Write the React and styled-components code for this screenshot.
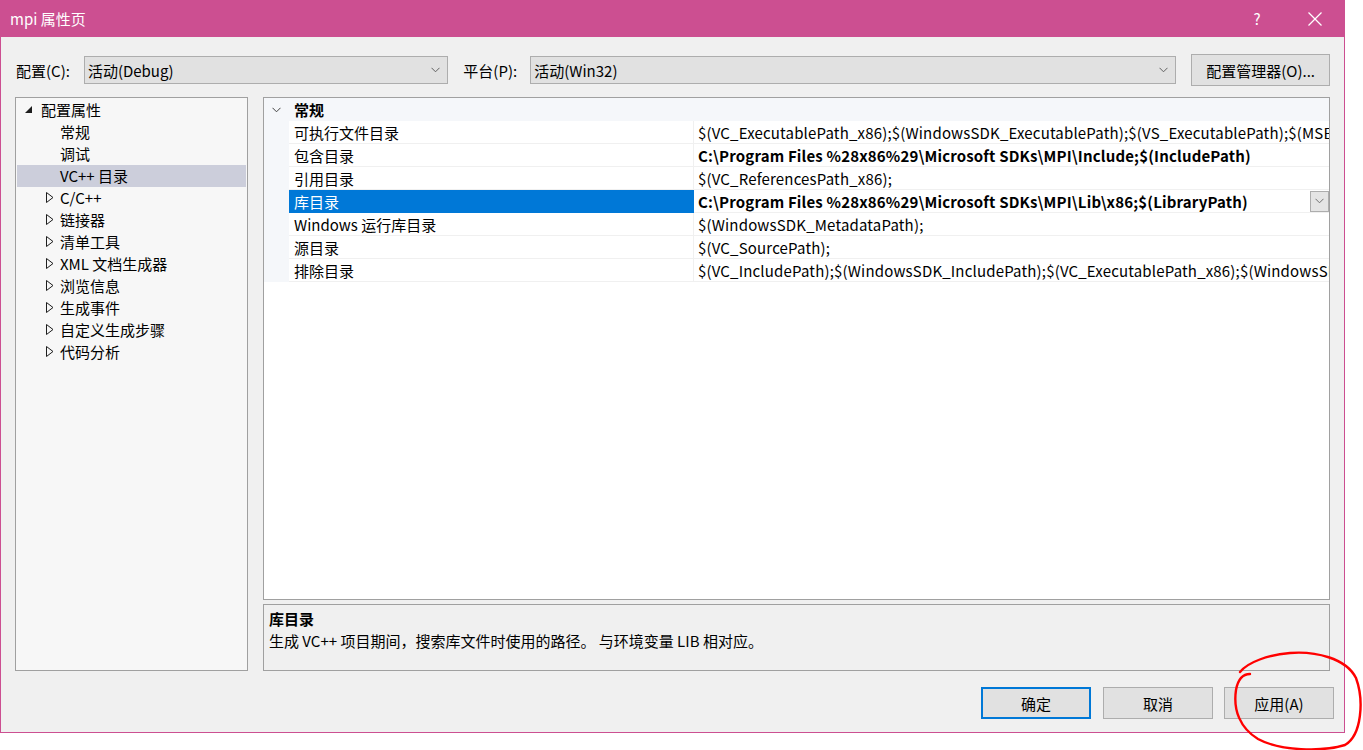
import React from 'react';
import styled, { createGlobalStyle, css } from 'styled-components';

const GlobalStyle = createGlobalStyle`
  html, body {
    margin: 0;
    background: #fff;
  }
  body {
    font-family: "Noto Sans CJK SC", "Noto Sans", sans-serif;
    font-size: 15px;
    color: #000;
  }
`;

const Page = styled.div`
  position: relative;
  width: 1363px;
  height: 750px;
  overflow: hidden;
`;

const Dialog = styled.div`
  width: 1345px;
  height: 733px;
  box-sizing: border-box;
  border: 1px solid #cc4f91;
  border-top: none;
  background: #f0f0f0;
  display: flex;
  flex-direction: column;
`;

const TitleBar = styled.div`
  height: 37px;
  background: #cc4f91;
  color: #fff;
  display: flex;
  align-items: center;
  padding-left: 9px;
  font-size: 15px;
`;

const TitleText = styled.span`
  flex: 1;
`;

const TitleButton = styled.div`
  width: 58px;
  height: 37px;
  display: flex;
  align-items: center;
  justify-content: center;
  color: #fff;
  font-size: 15px;
`;

const Body = styled.div`
  flex: 1;
  padding: 17px 14px 0 14px;
  display: flex;
  flex-direction: column;
`;

const ConfigRow = styled.div`
  height: 32px;
  display: flex;
  align-items: center;
`;

const Label = styled.span`
  width: ${p => p.w}px;
  margin-left: ${p => p.ml || 0}px;
  padding-left: 1px;
  box-sizing: border-box;
`;

const Combo = styled.div`
  width: ${p => p.w}px;
  height: 28px;
  box-sizing: border-box;
  border: 1px solid #adadad;
  background: #e1e1e1;
  display: flex;
  align-items: center;
  padding-left: 3px;
`;

const ComboText = styled.span`
  flex: 1;
`;

const ChevronBox = styled.span`
  width: 24px;
  display: flex;
  align-items: center;
  justify-content: center;
`;

const Button = styled.div`
  width: ${p => p.w || 110}px;
  height: 32px;
  box-sizing: border-box;
  margin-left: ${p => p.ml || 0}px;
  border: 1px solid #adadad;
  background: #e1e1e1;
  display: flex;
  align-items: center;
  justify-content: center;
  ${p => p.primary && css`
    border: 2px solid #0078d7;
  `}
`;

const Main = styled.div`
  margin-top: 11px;
  height: 574px;
  display: flex;
  gap: 15px;
`;

const Tree = styled.div`
  width: 233px;
  box-sizing: border-box;
  border: 1px solid #a0a0a0;
  background: #f7f7f7;
  padding: 1px;
`;

const TreeItem = styled.div`
  height: 22px;
  box-sizing: border-box;
  padding-bottom: 1px;
  display: flex;
  align-items: center;
  padding-left: ${p => p.indent}px;
  background: ${p => (p.selected ? '#cccedb' : 'transparent')};
`;

const Expander = styled.span`
  width: ${p => p.w}px;
  display: flex;
  align-items: center;
`;

const RightCol = styled.div`
  flex: 1;
  display: flex;
  flex-direction: column;
  gap: 4px;
`;

const Grid = styled.div`
  height: 503px;
  box-sizing: border-box;
  border: 1px solid #a0a0a0;
  background: #fff;
  overflow: hidden;
`;

const HeaderRow = styled.div`
  height: 23px;
  display: flex;
  align-items: center;
  background: #f5f7fa;
  font-weight: bold;
`;

const HeaderText = styled.span`
  padding-left: 5px;
  padding-bottom: 1px;
`;

const Gutter = styled.div`
  width: 25px;
  height: 100%;
  background: #f5f7fa;
  display: flex;
  align-items: center;
  justify-content: center;
`;

const PropRow = styled.div`
  height: 23px;
  display: grid;
  grid-template-columns: 25px 405px 1fr;
`;

const NameCell = styled.div`
  box-sizing: border-box;
  border-bottom: 1px solid #f0f0f0;
  border-right: 1px solid #f0f0f0;
  padding-left: 5px;
  display: flex;
  align-items: center;
  white-space: nowrap;
  ${p => p.selected && css`
    background: #0078d7;
    color: #fff;
    border-color: #0078d7;
  `}
`;

const ValueCell = styled.div`
  box-sizing: border-box;
  border-bottom: 1px solid #f0f0f0;
  padding-left: 4px;
  display: flex;
  align-items: center;
  white-space: nowrap;
  overflow: hidden;
  letter-spacing: 0.17px;
  font-weight: ${p => (p.bold ? 'bold' : 'normal')};
`;

const ValueText = styled.span`
  flex: 1;
  overflow: hidden;
`;

const CellDrop = styled.span`
  width: 19px;
  height: 21px;
  box-sizing: border-box;
  border: 1px solid #adadad;
  background: #e5e5e5;
  display: flex;
  align-items: center;
  justify-content: center;
  flex-shrink: 0;
`;

const Description = styled.div`
  height: 67px;
  box-sizing: border-box;
  border: 1px solid #a0a0a0;
  background: #f0f0f0;
  padding: 3px 5px;
`;

const DescTitle = styled.div`
  font-weight: bold;
  height: 22px;
  line-height: 22px;
`;

const DescText = styled.div`
  height: 22px;
  line-height: 22px;
`;

const Footer = styled.div`
  margin-top: 16px;
  margin-right: -4px;
  display: flex;
  justify-content: flex-end;
`;

const Scribble = styled.svg`
  position: absolute;
  left: 1225px;
  top: 645px;
`;

const Chevron = ({ color = '#606060', size = 9 }) => (
  <svg width={size} height={6} viewBox="0 0 9 6">
    <polyline points="0.5,0.8 4.5,4.8 8.5,0.8" fill="none" stroke={color} strokeWidth="1" />
  </svg>
);

const Collapsed = () => (
  <svg width="8" height="11" viewBox="0 0 8 11">
    <polygon points="0.5,0.5 7,5.5 0.5,10.5" fill="none" stroke="#1e1e1e" strokeWidth="1" />
  </svg>
);

const Expanded = () => (
  <svg width="7" height="7" viewBox="0 0 7 7">
    <polygon points="7,0 7,7 0,7" fill="#1e1e1e" />
  </svg>
);

const CloseIcon = () => (
  <svg width="14" height="14" viewBox="0 0 14 14">
    <line x1="0.5" y1="0.5" x2="13.5" y2="13.5" stroke="#fff" strokeWidth="1.2" />
    <line x1="13.5" y1="0.5" x2="0.5" y2="13.5" stroke="#fff" strokeWidth="1.2" />
  </svg>
);

const treeChildren = ['常规', '调试', 'VC++ 目录'];
const treeGroups = ['C/C++', '链接器', '清单工具', 'XML 文档生成器', '浏览信息', '生成事件', '自定义生成步骤', '代码分析'];

const props = [
  { name: '可执行文件目录', value: '$(VC_ExecutablePath_x86);$(WindowsSDK_ExecutablePath);$(VS_ExecutablePath);$(MSBuild_ExecutablePath);$(FxCopDir);$(PATH);' },
  { name: '包含目录', value: 'C:\\Program Files %28x86%29\\Microsoft SDKs\\MPI\\Include;$(IncludePath)', bold: true },
  { name: '引用目录', value: '$(VC_ReferencesPath_x86);' },
  { name: '库目录', value: 'C:\\Program Files %28x86%29\\Microsoft SDKs\\MPI\\Lib\\x86;$(LibraryPath)', bold: true, selected: true },
  { name: 'Windows 运行库目录', value: '$(WindowsSDK_MetadataPath);' },
  { name: '源目录', value: '$(VC_SourcePath);' },
  { name: '排除目录', value: '$(VC_IncludePath);$(WindowsSDK_IncludePath);$(VC_ExecutablePath_x86);$(WindowsSDK_LibraryPath_x86);' },
];

const App = () => {
  return (
    <Page>
      <GlobalStyle />
      <Dialog>
        <TitleBar>
          <TitleText>mpi 属性页</TitleText>
          <TitleButton>?</TitleButton>
          <TitleButton>
            <CloseIcon />
          </TitleButton>
        </TitleBar>
        <Body>
          <ConfigRow>
            <Label w={69}>配置(C):</Label>
            <Combo w={365}>
              <ComboText>活动(Debug)</ComboText>
              <ChevronBox><Chevron /></ChevronBox>
            </Combo>
            <Label w={68} ml={14}>平台(P):</Label>
            <Combo w={647}>
              <ComboText>活动(Win32)</ComboText>
              <ChevronBox><Chevron /></ChevronBox>
            </Combo>
            <Button w={139} ml={15}>配置管理器(O)...</Button>
          </ConfigRow>

          <Main>
            <Tree>
              <TreeItem indent={8}>
                <Expander w={16}><Expanded /></Expander>
                配置属性
              </TreeItem>
              {treeChildren.map(t => (
                <TreeItem key={t} indent={43} selected={t === 'VC++ 目录'}>{t}</TreeItem>
              ))}
              {treeGroups.map(t => (
                <TreeItem key={t} indent={29}>
                  <Expander w={14}><Collapsed /></Expander>
                  {t}
                </TreeItem>
              ))}
            </Tree>

            <RightCol>
              <Grid>
                <HeaderRow>
                  <Gutter><Chevron color="#404040" size={9} /></Gutter>
                  <HeaderText>常规</HeaderText>
                </HeaderRow>
                {props.map(p => (
                  <PropRow key={p.name}>
                    <Gutter />
                    <NameCell selected={p.selected}>{p.name}</NameCell>
                    <ValueCell bold={p.bold}>
                      <ValueText>{p.value}</ValueText>
                      {p.selected && <CellDrop><Chevron color="#707070" size={9} /></CellDrop>}
                    </ValueCell>
                  </PropRow>
                ))}
              </Grid>
              <Description>
                <DescTitle>库目录</DescTitle>
                <DescText>生成 VC++ 项目期间，搜索库文件时使用的路径。 与环境变量 LIB 相对应。</DescText>
              </Description>
            </RightCol>
          </Main>

          <Footer>
            <Button primary>确定</Button>
            <Button ml={12}>取消</Button>
            <Button ml={11}>应用(A)</Button>
          </Footer>
        </Body>
      </Dialog>

      <Scribble width="138" height="105" viewBox="1225 645 138 105">
        <path
          d="M1250 674 C1243 674 1238 679 1236 690 C1233 710 1240 728 1258 739 C1280 751 1322 752 1345 745 C1362 735 1364 700 1356 678 C1346 658 1315 651 1290 653 C1268 655 1248 662 1240 672"
          fill="none"
          stroke="#ff0000"
          strokeWidth="2.4"
          strokeLinecap="round"
        />
      </Scribble>
    </Page>
  );
};

export default App;
